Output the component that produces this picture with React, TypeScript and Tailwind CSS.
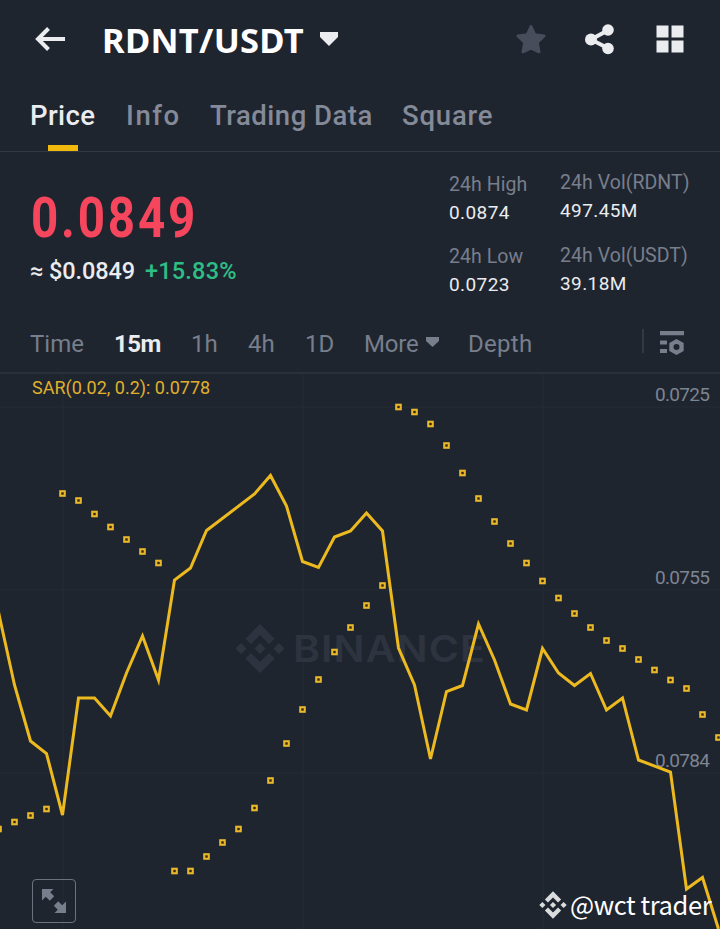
import React from "react";

const SAR: [number, number][] = [
  [-1.5, 829], [14.5, 822], [30.5, 815.5], [46.5, 809], [62.5, 493.5], [78.5, 500.5], [94.5, 514], [110.5, 527],
  [126.5, 539.5], [142.5, 551.5], [158.5, 563], [174.5, 871], [190.5, 871], [206.5, 856.5], [222.5, 842.5],
  [238.5, 829], [254.5, 808], [270.5, 780.5], [286.5, 743.5], [302.5, 709.5], [318.5, 679.5], [334.5, 652],
  [350.5, 627.5], [366.5, 605.5], [382.5, 585.5], [398.5, 407], [414.5, 412], [430.5, 424], [446.5, 445.5],
  [462.5, 473], [478.5, 498.5], [494.5, 521.5], [510.5, 543.5], [526.5, 563], [542.5, 581], [558.5, 598],
  [574.5, 613.5], [590.5, 627.5], [606.5, 640.5], [622.5, 648.5], [638.5, 659.5], [654.5, 670], [670.5, 680],
  [686.5, 688.5], [702.5, 714.5], [718.5, 737.5],
];

const PRICE =
  "-1.5,612 0,619 14.5,685 30.5,741 46.5,753.5 62.5,815 78.5,698 94.5,698 110.5,716 126.5,673 142.5,636 158.5,680 174.5,580 190.5,568 206.5,530.5 254.5,494 270.5,475.5 286.5,506 302.5,561.5 318.5,567.5 334.5,537 350.5,531 366.5,513 382.5,531 398.5,648 414.5,685 430.5,759 446.5,691.5 462.5,685.5 478.5,624 494.5,660 510.5,704 526.5,710 542.5,648.5 558.5,673 574.5,685.5 590.5,673.5 606.5,710 622.5,698 638.5,760 670.5,772 686.5,889 702.5,877.5 718.5,929";

function Diamond({ x, y, s }: { x: number; y: number; s: number }) {
  return (
    <g transform={`translate(${x} ${y}) scale(${s})`}>
      <path d="M0-24.5 14.5-10 9-4.5 0-13.5-9-4.5-14.5-10ZM0 24.5 14.5 10 9 4.5 0 13.5-9 4.5-14.5 10ZM0-5.5 5.5 0 0 5.5-5.5 0ZM-19-5.5-13.5 0-19 5.5-24.5 0ZM19-5.5 24.5 0 19 5.5 13.5 0Z" />
    </g>
  );
}

function Header() {
  return (
    <header className="flex h-[78px] items-center pl-[34px] pr-9">
      <svg className="h-6 w-8" viewBox="0 0 32 24" fill="none" stroke="#eaecef" strokeWidth="4">
        <path d="M31 12H4M14.5 1.5 4 12l10.5 10.5" />
      </svg>
      <h1 className="mt-px ml-9 w-[204px] whitespace-nowrap font-['Noto_Sans',sans-serif] text-[34.5px] leading-[48px] font-bold tracking-[0.3px] text-white">
        RDNT/USDT
      </h1>
      <svg className="ml-[14px] h-4 w-[18px]" viewBox="0 0 18 16" fill="#eaecef">
        <path d="M0 1h18v5L9 15 0 6Z" />
      </svg>
      <svg className="ml-auto h-8 w-8" viewBox="0 0 32 32" fill="#474d5b" stroke="#474d5b" strokeWidth="3" strokeLinejoin="round">
        <path d="m16 3.5 3.7 8.2 9.3 1.2-6.7 6.6 1.7 9.3-8-3.8-8 3.8 1.7-9.3L3 12.9l9.3-1.2Z" />
      </svg>
      <svg className="ml-[37px] h-8 w-[31px]" viewBox="0 0 31 32" fill="#eaecef">
        <path d="M24.5 7 7 16.5 24.5 25.5" fill="none" stroke="#eaecef" strokeWidth="4" />
        <circle cx="24" cy="7" r="5.8" />
        <circle cx="7" cy="16.5" r="6" />
        <circle cx="24" cy="25.5" r="5.8" />
      </svg>
      <svg className="ml-[41px] h-7 w-7" viewBox="0 0 28 28" fill="#eaecef">
        <path d="M.5.5h12v12H.5zM15.5.5h12v12h-12zM.5 15.5h12v12H.5zM15.5 15.5h12v12h-12z" />
      </svg>
    </header>
  );
}

function Tabs() {
  return (
    <nav className="flex h-[74px] items-start border-b border-[#333943] pl-[30px] pt-[18px] text-[27.5px] leading-10 font-medium whitespace-nowrap text-[#848a98]">
      <div className="relative w-24 tracking-[0.4px] text-[#eaecef]">
        Price
        <span className="absolute top-[49px] left-[18px] h-1.5 w-[30px] bg-[#f0b90b]" />
      </div>
      <div className="w-[84px] tracking-[1.6px]">Info</div>
      <div className="w-48 tracking-[0.5px]">Trading Data</div>
      <div className="tracking-[0.8px]">Square</div>
    </nav>
  );
}

function Stat({ label, value }: { label: string; value: string }) {
  return (
    <div className="h-[72px] whitespace-nowrap">
      <div className="text-[19.5px] leading-7 tracking-[0.05px] text-[#777e8c]">{label}</div>
      <div className="text-[19px] leading-7 tracking-[0.4px] text-[#eaecef]">{value}</div>
    </div>
  );
}

function Summary() {
  return (
    <section className="flex h-[162px] pl-[30px]">
      <div className="w-[419px] pt-[34px] whitespace-nowrap">
        <div className="ml-px w-fit origin-left scale-x-[0.85] text-[56px] leading-16 font-bold tracking-[3.3px] text-[#f6465d]">0.0849</div>
        <div className="mt-[5px] flex text-[23.5px] leading-8 font-medium">
          <span className="w-[115px] tracking-[-0.1px] text-[#eaecef]">≈ $0.0849</span>
          <span className="tracking-[0.2px] text-[#2ebd85]">+15.83%</span>
        </div>
      </div>
      <div className="w-[111px] pt-[19px]">
        <Stat label="24h High" value="0.0874" />
        <Stat label="24h Low" value="0.0723" />
      </div>
      <div className="flex flex-col gap-px pt-[17px]">
        <Stat label="24h Vol(RDNT)" value="497.45M" />
        <Stat label="24h Vol(USDT)" value="39.18M" />
      </div>
    </section>
  );
}

function Intervals() {
  return (
    <nav className="flex h-[60px] items-center border-b-2 border-[#29303a] pl-[30px] text-[24px] leading-8 whitespace-nowrap text-[#777e8c]">
      <span className="mt-0.5 w-[84px]">Time</span>
      <span className="mt-0.5 w-[77px] font-bold tracking-[-0.5px] text-[#eaecef]">15m</span>
      <span className="mt-0.5 w-[57px]">1h</span>
      <span className="mt-0.5 w-[57px]">4h</span>
      <span className="mt-0.5 w-[59px]">1D</span>
      <span className="mt-0.5 w-[62px] tracking-[-0.2px]">More</span>
      <svg className="mb-1 h-[11px] w-[13px]" viewBox="0 0 13 11" fill="#777e8c">
        <path d="M0 1h13v4l-6.5 6L0 5Z" />
      </svg>
      <span className="mt-0.5 ml-[29px] tracking-[0.3px]">Depth</span>
      <span className="mb-1 ml-auto h-6 w-0.5 bg-[#323945]" />
      <svg className="mr-9 ml-4 h-6 w-6" viewBox="0 0 24 24" fill="#777e8c">
        <path d="M0 0h24v4.2H0zM0 9.5h7v4H0zM0 18h7v4H0z" />
        <path fillRule="evenodd" d="m16.5 8 7.2 4v8l-7.2 4-7.2-4v-8Zm0 5a3 3 0 1 0 0 6 3 3 0 0 0 0-6Z" />
      </svg>
    </nav>
  );
}

function Chart() {
  return (
    <main className="relative h-[555px] overflow-hidden">
      <svg className="block h-[555px] w-[720px]" viewBox="0 374 720 555">
        <path d="M0 407H720M0 590H720M0 773H720M63 374V929M303 374V929M543 374V929" stroke="#242a34" strokeWidth="1.5" />
        <g fill="#2e343f">
          <Diamond x={260} y={648.5} s={1} />
          <text x="293" y="662" textLength="193" lengthAdjust="spacingAndGlyphs" fontFamily="Inter, sans-serif" fontWeight="600" fontSize="37.5" letterSpacing="1">BINANCE</text>
        </g>
        <g fill="#7d8492" fontFamily="Roboto, sans-serif" fontSize="19">
          <text x="655" y="401" textLength="55">0.0725</text>
          <text x="655" y="584" textLength="55">0.0755</text>
          <text x="655" y="767" textLength="55">0.0784</text>
        </g>
        <polyline points={PRICE} fill="none" stroke="#ecb91f" strokeWidth="3" strokeMiterlimit="4" />
        <g fill="#33270f" stroke="#e9b92b" strokeWidth="2.1">
          {SAR.map(([x, y]) => (
            <rect key={x} x={x - 2.25} y={y - 2.25} width="4.5" height="4.5" />
          ))}
        </g>
      </svg>
      <div className="absolute top-0.5 left-8 text-[18px] leading-6 whitespace-nowrap text-[#e0b02c]">SAR(0.02, 0.2): 0.0778</div>
      <button className="absolute top-[505px] left-8 flex h-11 w-11 items-center justify-center rounded-[4px] border border-[#6b7280]">
        <svg className="h-6 w-6" viewBox="0 0 24 24" fill="#777e8c">
          <path d="M0 0h11.5L8.2 3.3l4 4-4.4 4.4-4-4L0 11.5ZM24 24H12.5l3.3-3.3-4-4 4.4-4.4 4 4L24 12.5Z" />
        </svg>
      </button>
      <div className="absolute top-[512px] left-[539px] flex items-center">
        <svg className="mt-0.5 h-7 w-7" viewBox="-14 -14 28 28" fill="#dadbdd">
          <Diamond x={0} y={0} s={0.56} />
        </svg>
        <span className="ml-[3px] font-['Noto_Sans_CJK_SC',sans-serif] text-[25.5px] leading-9 tracking-[-0.4px] whitespace-nowrap text-white">@wct trader</span>
      </div>
    </main>
  );
}

export default function App() {
  return (
    <div className="h-[929px] w-[720px] overflow-hidden bg-[#1f252f] font-[Roboto,sans-serif]">
      <Header />
      <Tabs />
      <Summary />
      <Intervals />
      <Chart />
    </div>
  );
}
